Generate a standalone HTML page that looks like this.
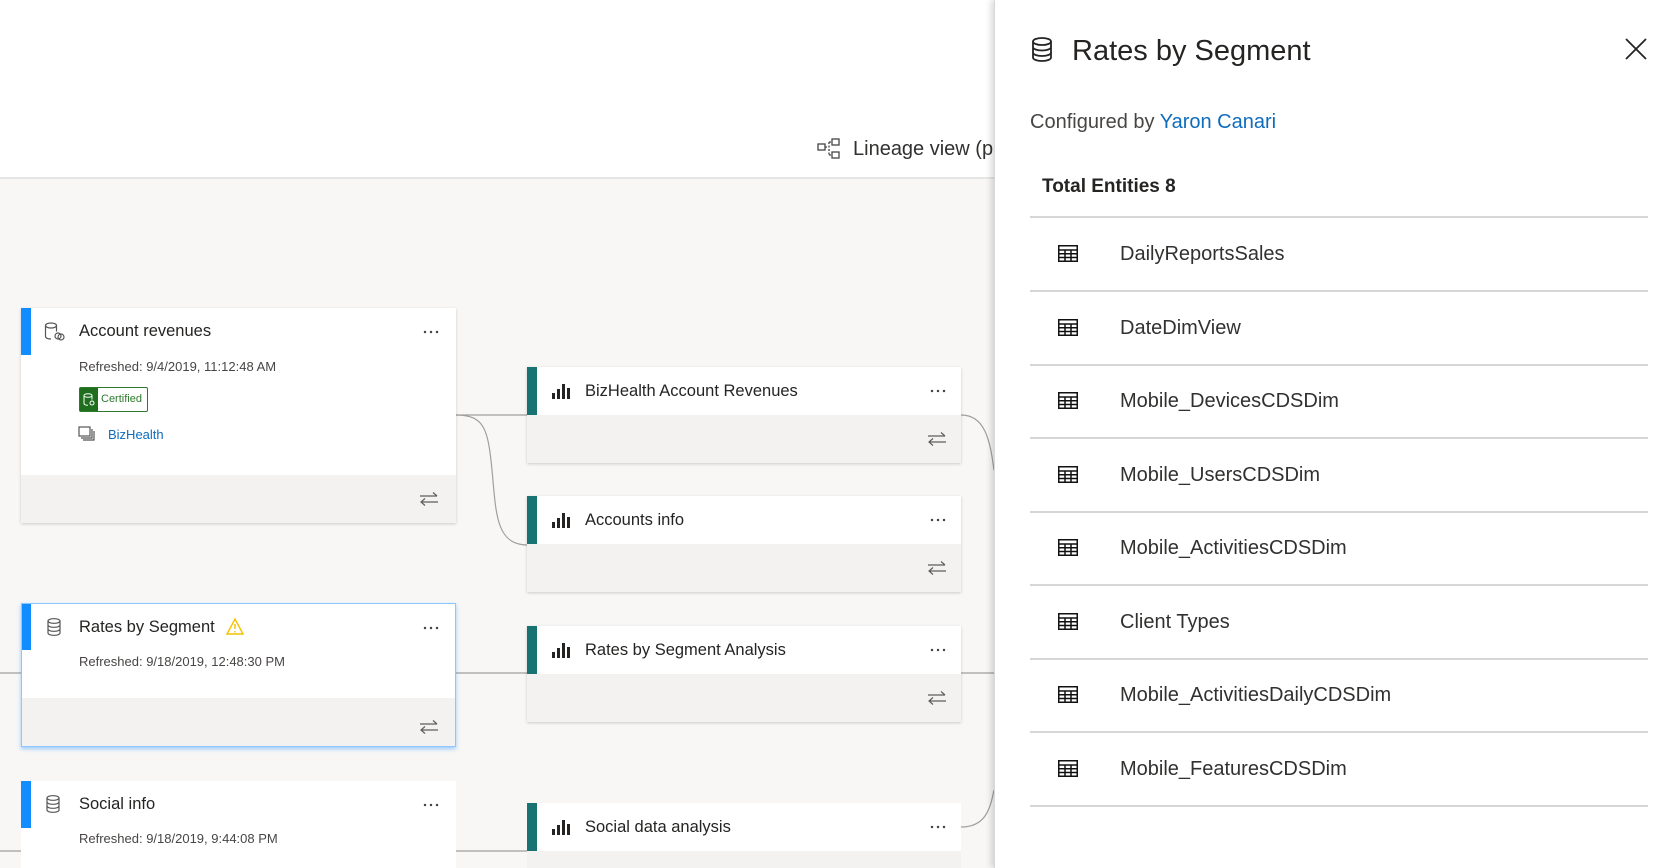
<!DOCTYPE html>
<html><head><meta charset="utf-8">
<style>
*{box-sizing:border-box;margin:0;padding:0}
html,body{width:1653px;height:868px;overflow:hidden}
body{background:#f8f7f6;font-family:"Liberation Sans",sans-serif;color:#252423;position:relative}
.top{position:absolute;left:0;top:0;width:1653px;height:179px;background:#fff;border-bottom:2px solid #e6e6e6}
.card{position:absolute;background:#fff;box-shadow:0 1px 3px rgba(0,0,0,.18);overflow:hidden}
.bar{position:absolute;left:0;top:0;width:10px}
.blue{background:#118dff}.teal{background:#1a7373}
.title{position:absolute;font-size:16.5px;color:#252423}
.sub{position:absolute;font-size:13px;color:#484644}
.dots{position:absolute;width:18px;height:4px;background:radial-gradient(circle,#484644 1.1px,transparent 1.4px) 0 0/6px 4px repeat-x}
.foot{position:absolute;left:0;right:0;bottom:0;background:#f3f2f1}
.sw{position:absolute}
.panel{position:absolute;left:994px;top:0;width:659px;height:868px;background:#fff;box-shadow:-3px 0 6px rgba(0,0,0,.15);border-left:1px solid #d8d8d8}
.row{position:absolute;left:35px;width:618px;height:74px;border-bottom:2px solid #d6d6d6}
.row span{position:absolute;left:90px;top:25px;font-size:20px;color:#323130}
.row svg{position:absolute;left:28px;top:27px}
</style></head><body>
<svg width="0" height="0" style="position:absolute"><defs>
<symbol id="sw" viewBox="0 0 20 16"><path d="M1 5h17M14 1.5l4 3.5M19 11H2M6 7.5L2 11l4 3.5" fill="none" stroke="#605e5c" stroke-width="1.2"/></symbol>
<symbol id="tb" viewBox="0 0 20 17"><g fill="none" stroke="#111" stroke-width="1.5"><rect x=".75" y=".75" width="18.5" height="15.5"/><path d="M.75 5h18.5M.75 8.8h18.5M.75 12.5h18.5M7 5v11M13 5v11"/></g></symbol>
<symbol id="bc" viewBox="0 0 19 16"><g fill="#252423"><rect x="0" y="10" width="3" height="6"/><rect x="5" y="6" width="3" height="10"/><rect x="10" y="1" width="3" height="15"/><rect x="15" y="5" width="3" height="11"/></g></symbol>
<symbol id="db" viewBox="0 0 16 18"><path fill="none" stroke="#555" stroke-width="1.2" d="M2 3c0-1.3 2.7-2.3 6-2.3s6 1 6 2.3-2.7 2.3-6 2.3S2 4.3 2 3v12c0 1.3 2.7 2.3 6 2.3s6-1 6-2.3V3M2 7c0 1.3 2.7 2.3 6 2.3s6-1 6-2.3M2 11c0 1.3 2.7 2.3 6 2.3s6-1 6-2.3"/></symbol>
</defs></svg>
<div class="top"></div>
<svg style="position:absolute;left:817px;top:138px" width="24" height="22" viewBox="0 0 24 22" fill="none" stroke="#444" stroke-width="1.3"><rect x="1" y="6" width="7" height="6"/><rect x="15" y="1" width="7" height="6"/><rect x="15" y="14" width="7" height="6"/><path d="M8 9h4M12 4v14M12 4h3M12 17h3" stroke-dasharray="2 1.5"/></svg>
<div style="position:absolute;left:853px;top:138px;font-size:20px;color:#323130">Lineage view (p</div>

<svg style="position:absolute;left:0;top:0" width="994" height="868" fill="none" stroke="#a19f9d" stroke-width="1.2">
<path d="M456 415H527"/><path d="M456 415C485 415 488 430 492 470S495 545 527 545"/>
<path d="M0 673H21M456 673H527M961 673H994"/>
<path d="M0 851H21M456 851H527"/>
<path d="M961 415C985 415 990 440 994 470"/>
<path d="M961 827C985 827 990 810 994 790"/>
</svg>

<div class="card" style="left:21px;top:308px;width:435px;height:215px">
<div class="bar blue" style="height:47px"></div>
<svg class="sw" style="left:23px;top:14px" width="22" height="20" viewBox="0 0 22 20" fill="none" stroke="#555" stroke-width="1.2"><ellipse cx="7" cy="3.5" rx="5.5" ry="2.5"/><path d="M1.5 3.5v11c0 1.4 2.5 2.5 5.5 2.5M12.5 3.5v6"/><circle cx="14" cy="14" r="3"/><circle cx="17" cy="15" r="3"/></svg>
<div class="title" style="left:58px;top:14px">Account revenues</div>
<div class="dots" style="left:401px;top:22px"></div>
<div class="sub" style="left:58px;top:51px">Refreshed: 9/4/2019, 11:12:48 AM</div>
<div style="position:absolute;left:58px;top:79px;width:69px;height:25px;border:1px solid #2d7a2d;border-radius:2px;background:#fff">
<div style="position:absolute;left:0;top:0;width:18px;height:23px;background:#1e6e1e"><svg style="position:absolute;left:3px;top:5px" width="12" height="13" viewBox="0 0 12 13" fill="none" stroke="#fff" stroke-width="1"><ellipse cx="5" cy="2.5" rx="4" ry="1.8"/><path d="M1 2.5v8c0 1 1.8 1.8 4 1.8M9 2.5v4"/><circle cx="9" cy="10" r="2"/></svg></div>
<div style="position:absolute;left:21px;top:5px;font-size:11px;color:#2d7a2d">Certified</div></div>
<svg class="sw" style="left:57px;top:118px" width="18" height="16" viewBox="0 0 18 16" fill="none" stroke="#555" stroke-width="1.2"><rect x="1" y="1" width="11" height="9"/><path d="M3 12h11V3M5 14h11V5"/></svg>
<div class="sub" style="left:87px;top:119px;color:#0f6cbd">BizHealth</div>
<div class="foot" style="height:48px"></div>
<svg class="sw" style="left:398px;top:183px" width="20" height="16"><use href="#sw"/></svg>
</div>

<div class="card" style="left:21px;top:603px;width:435px;height:144px;border:1px solid #8cc8ff;box-shadow:0 2px 4px rgba(17,141,255,.4)">
<div class="bar blue" style="height:47px;left:-1px;top:-1px"></div>
<svg class="sw" style="left:24px;top:14px" width="16" height="18"><use href="#db"/></svg>
<div class="title" style="left:57px;top:14px">Rates by Segment</div>
<svg class="sw" style="left:204px;top:14px" width="18" height="17" viewBox="0 0 18 17" fill="none" stroke="#f2c200" stroke-width="1.4"><path d="M9 1L17 16H1Z"/><path d="M9 6v5M9 13v1.5"/></svg>
<div class="dots" style="left:400px;top:22px"></div>
<div class="sub" style="left:57px;top:50px">Refreshed: 9/18/2019, 12:48:30 PM</div>
<div class="foot" style="height:48px"></div>
<svg class="sw" style="left:397px;top:115px" width="20" height="16"><use href="#sw"/></svg>
</div>

<div class="card" style="left:21px;top:781px;width:435px;height:87px;box-shadow:none">
<div class="bar blue" style="height:47px"></div>
<svg class="sw" style="left:24px;top:14px" width="16" height="18"><use href="#db"/></svg>
<div class="title" style="left:58px;top:14px">Social info</div>
<div class="dots" style="left:401px;top:22px"></div>
<div class="sub" style="left:58px;top:50px">Refreshed: 9/18/2019, 9:44:08 PM</div>
</div>

<div class="card" style="left:527px;top:367px;width:434px;height:96px"><div class="bar teal" style="height:48px"></div>
<svg class="sw" style="left:25px;top:16px" width="19" height="16"><use href="#bc"/></svg>
<div class="title" style="left:58px;top:15px">BizHealth Account Revenues</div><div class="dots" style="left:402px;top:22px"></div>
<div class="foot" style="height:48px"></div><svg class="sw" style="left:400px;top:64px" width="20" height="16"><use href="#sw"/></svg></div>

<div class="card" style="left:527px;top:496px;width:434px;height:96px"><div class="bar teal" style="height:48px"></div>
<svg class="sw" style="left:25px;top:16px" width="19" height="16"><use href="#bc"/></svg>
<div class="title" style="left:58px;top:15px">Accounts info</div><div class="dots" style="left:402px;top:22px"></div>
<div class="foot" style="height:48px"></div><svg class="sw" style="left:400px;top:64px" width="20" height="16"><use href="#sw"/></svg></div>

<div class="card" style="left:527px;top:626px;width:434px;height:96px"><div class="bar teal" style="height:48px"></div>
<svg class="sw" style="left:25px;top:16px" width="19" height="16"><use href="#bc"/></svg>
<div class="title" style="left:58px;top:15px">Rates by Segment Analysis</div><div class="dots" style="left:402px;top:22px"></div>
<div class="foot" style="height:48px"></div><svg class="sw" style="left:400px;top:64px" width="20" height="16"><use href="#sw"/></svg></div>

<div class="card" style="left:527px;top:803px;width:434px;height:65px;box-shadow:none"><div class="bar teal" style="height:48px"></div>
<svg class="sw" style="left:25px;top:16px" width="19" height="16"><use href="#bc"/></svg>
<div class="title" style="left:58px;top:15px">Social data analysis</div><div class="dots" style="left:402px;top:22px"></div>
<div class="foot" style="height:17px"></div></div>

<div class="panel">
<svg style="position:absolute;left:36px;top:37px" width="22" height="26" viewBox="0 0 22 26" fill="none" stroke="#252423" stroke-width="1.8"><ellipse cx="11" cy="4.5" rx="9" ry="3.5"/><path d="M2 4.5v16c0 2 4 3.5 9 3.5s9-1.5 9-3.5v-16M2 10c0 2 4 3.5 9 3.5s9-1.5 9-3.5M2 15.5c0 2 4 3.5 9 3.5s9-1.5 9-3.5"/></svg>
<div style="position:absolute;left:77px;top:35px;font-size:29px;color:#252423">Rates by Segment</div>
<svg style="position:absolute;left:630px;top:38px" width="22" height="22" viewBox="0 0 22 22" stroke="#252423" stroke-width="1.8"><path d="M1 1L21 21M21 1L1 21"/></svg>
<div style="position:absolute;left:35px;top:111px;font-size:20px;color:#484644">Configured by <span style="color:#0f6cbd">Yaron Canari</span></div>
<div style="position:absolute;left:47px;top:176px;font-size:19px;font-weight:bold;color:#252423">Total Entities 8</div>
<div style="position:absolute;left:35px;top:216px;width:618px;height:2px;background:#d6d6d6"></div>
<div class="row" style="top:218px"><svg width="20" height="17"><use href="#tb"/></svg><span>DailyReportsSales</span></div>
<div class="row" style="top:292px"><svg width="20" height="17"><use href="#tb"/></svg><span>DateDimView</span></div>
<div class="row" style="top:365px"><svg width="20" height="17"><use href="#tb"/></svg><span>Mobile_DevicesCDSDim</span></div>
<div class="row" style="top:439px"><svg width="20" height="17"><use href="#tb"/></svg><span>Mobile_UsersCDSDim</span></div>
<div class="row" style="top:512px"><svg width="20" height="17"><use href="#tb"/></svg><span>Mobile_ActivitiesCDSDim</span></div>
<div class="row" style="top:586px"><svg width="20" height="17"><use href="#tb"/></svg><span>Client Types</span></div>
<div class="row" style="top:659px"><svg width="20" height="17"><use href="#tb"/></svg><span>Mobile_ActivitiesDailyCDSDim</span></div>
<div class="row" style="top:733px"><svg width="20" height="17"><use href="#tb"/></svg><span>Mobile_FeaturesCDSDim</span></div>
</div>
</body></html>
